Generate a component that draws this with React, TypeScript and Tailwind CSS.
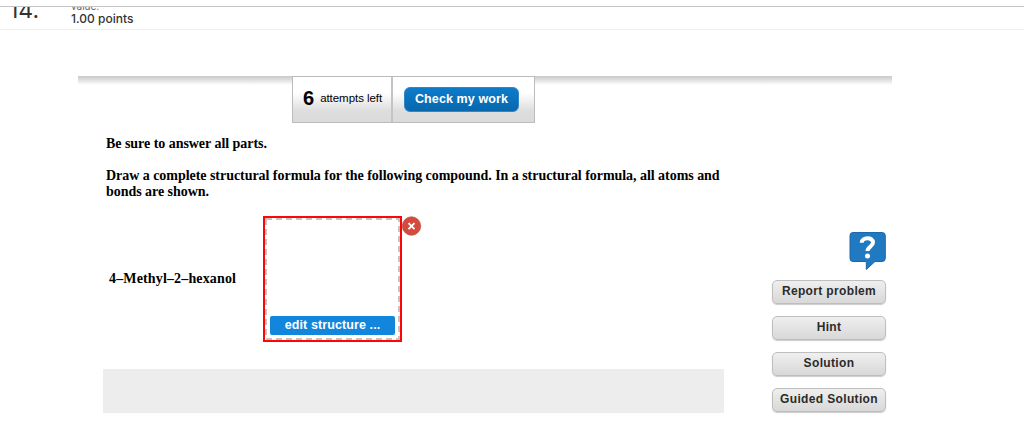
const sideActions = ['Report problem', 'Hint', 'Solution', 'Guided Solution']

function QuestionHeader() {
  return (
    <header className="h-[30px] pt-1.5 border-b border-[#efefef]">
      <div className="h-[23px] border-t border-[#c4c4c4] overflow-hidden flex text-[#333]">
        <div className="w-[71px] pl-[9px] -mt-[11px] text-[23px] leading-[28px] font-normal font-[Inter,sans-serif]">14.</div>
        <div className="-mt-[7px] font-[Inter,sans-serif]">
          <div className="text-[10px] leading-[12px] text-[#666]">value:</div>
          <div className="text-[12px] leading-[14px] font-medium">1.00 points</div>
        </div>
      </div>
    </header>
  )
}

function AttemptsBar() {
  return (
    <div className="ml-[214px] w-[243px] h-[47px] flex border border-[#bcbcbc] bg-linear-to-b from-white from-35% via-[#dedede] via-75% to-[#dadada]">
      <div className="w-[100px] pl-[10px] pt-[9px] flex items-start border-r-2 border-[#c4c4c4] text-black">
        <span className="text-[20px] leading-[24px] font-bold">6</span>
        <span className="ml-[6px] mt-[4px] text-[11.5px] leading-[16px] whitespace-nowrap tracking-[-0.05px]">attempts left</span>
      </div>
      <button className="ml-[11px] mt-[10px] w-[115px] h-[25px] rounded-[6px] border border-[#3385c4] bg-linear-to-b from-[#0d7bcb] to-[#0768ad] text-white text-[12.5px] leading-[21px] pb-px tracking-[0.1px] font-bold whitespace-nowrap">
        Check my work
      </button>
    </div>
  )
}

function StructureBox() {
  return (
    <div className="flex items-start">
      <div className="w-[139px] h-[126px] border-2 border-[#ff0505]">
        <div className="relative h-full px-[5px] pb-[5px] flex items-end">
          <svg className="absolute inset-0" width="135" height="122" fill="none">
            <rect x="1" y="1" width="133" height="120" stroke="#c4c4c4" strokeWidth="2" strokeDasharray="6 4" />
          </svg>
          <button className="relative w-[125px] h-[19px] rounded-[2px] bg-[#1186dc] text-white text-[12.5px] leading-[18px] pb-px tracking-[0.1px] font-bold whitespace-nowrap">
            edit structure ...
          </button>
        </div>
      </div>
      <svg width="20" height="20" viewBox="0 0 20 20">
        <circle cx="9.5" cy="10" r="9.2" fill="#d34b3d" stroke="#c0564b" strokeWidth="0.8" />
        <path d="M6.5 7.2 L12.5 13.2 M12.5 7.2 L6.5 13.2" stroke="#fff" strokeWidth="1.9" />
      </svg>
    </div>
  )
}

function HelpIcon() {
  return (
    <svg width="37" height="39" viewBox="0 0 37 39" className="ml-auto">
      <path
        d="M4 0.5 H33 Q36.3 0.5 36.3 3.5 V26.5 Q36.3 29.5 33 29.5 H26 L17.3 37.5 V29.5 H4 Q1 29.5 1 26.5 V3.5 Q1 0.5 4 0.5 Z"
        fill="#2079c1"
        stroke="#1b69ab"
      />
      <path d="M12.7 10.7 C12.8 4.8 24 4.6 24 10.6 C24 14.7 18.5 14.4 18.5 19" fill="none" stroke="#fff" strokeWidth="4" />
      <circle cx="18.5" cy="24" r="2.5" fill="#fff" />
    </svg>
  )
}

export default function App() {
  return (
    <div className="w-[1024px] h-[427px] bg-white overflow-hidden font-['Liberation_Sans',Arial,sans-serif]">
      <QuestionHeader />
      <main className="ml-[78px] mt-[46px] w-[814px]">
        <div className="h-[47px] bg-linear-to-b from-[#c8c8c8] to-white bg-[length:100%_9px] bg-no-repeat">
          <AttemptsBar />
        </div>
        <div className="flex">
          <section className="ml-[25px] w-[621px] pt-[13px] text-black font-bold font-['Liberation_Serif',serif] text-[14px] leading-4 tracking-[-0.04px]">
            <p className="pl-[3px]">Be sure to answer all parts.</p>
            <p className="pl-[3px] mt-4 whitespace-nowrap">
              Draw a complete structural formula for the following compound. In a structural formula, all atoms and
              <br />
              bonds are shown.
            </p>
            <div className="mt-4 flex items-center font-['Liberation_Sans',sans-serif]">
              <div className="w-[160px] pl-[6px] font-['Liberation_Serif',serif] tracking-[0.15px]">4–Methyl–2–hexanol</div>
              <StructureBox />
            </div>
            <div className="mt-[27px] h-[44px] bg-[#ededed]" />
          </section>
          <aside className="ml-[48px] w-[114px] pt-[109px]">
            <HelpIcon />
            <div className="mt-[9px] flex flex-col gap-[12px]">
              {sideActions.map((label) => (
                <button
                  key={label}
                  className="h-[24px] pb-[2px] rounded-[5px] border border-[#bebebe] bg-linear-to-b from-[#efefef] to-[#d8d8d8] shadow-[0_1px_1px_#ccc] text-[#2b2b2b] text-[12px] leading-[20px] tracking-[0.35px] font-bold whitespace-nowrap"
                >
                  {label}
                </button>
              ))}
            </div>
          </aside>
        </div>
      </main>
    </div>
  )
}
